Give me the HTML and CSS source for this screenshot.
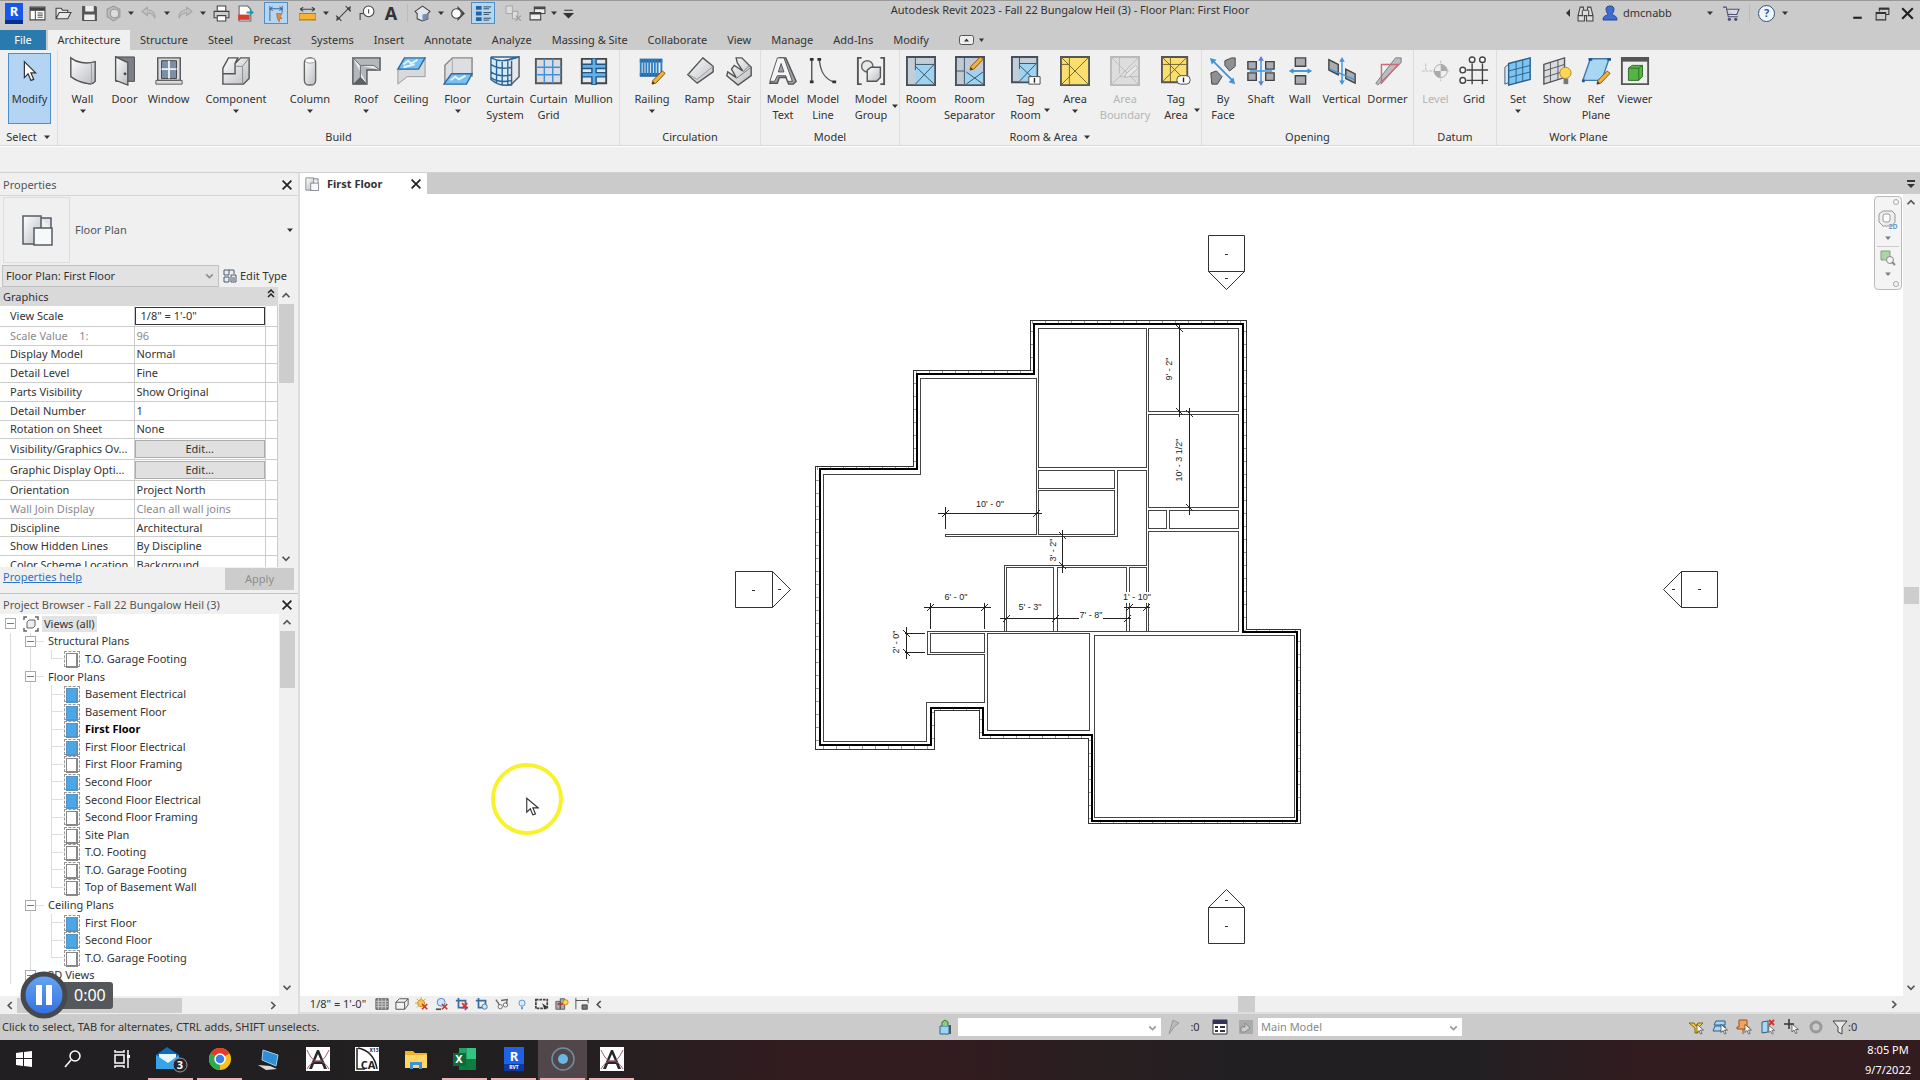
FILE: index.html
```
<!DOCTYPE html>
<html lang="en">
<head>
  <meta charset="UTF-8">
  <title>Autodesk Revit 2023 - Floor Plan: First Floor</title>
  <link rel="stylesheet" href="styles.css">
</head>
<body>

  <!-- shared symbols -->
  <svg class="defs" width="0" height="0" aria-hidden="true">
    <defs>
      <linearGradient id="metal" x1="0" y1="0" x2="1" y2="1">
        <stop offset="0" stop-color="#fff"/><stop offset="1" stop-color="#b9bcc2"/>
      </linearGradient>
      <linearGradient id="play" x1="0" y1="0" x2="0" y2="1">
        <stop offset="0" stop-color="#6aa5f5"/><stop offset="1" stop-color="#2f6fe0"/>
      </linearGradient>
    </defs>
    <symbol id="caret" viewBox="0 0 8 8"><path d="M1 2.500h6L4 6z" fill="#333"/></symbol>
    <symbol id="up" viewBox="0 0 16 16"><path d="M4 10l4-4 4 4" fill="none" stroke="#555" stroke-width="2"/></symbol>
    <symbol id="down" viewBox="0 0 16 16"><path d="M4 6l4 4 4-4" fill="none" stroke="#555" stroke-width="2"/></symbol>
    <symbol id="left" viewBox="0 0 16 16"><path d="M10 4L6 8l4 4" fill="none" stroke="#555" stroke-width="2"/></symbol>
    <symbol id="right" viewBox="0 0 16 16"><path d="M6 4l4 4-4 4" fill="none" stroke="#555" stroke-width="2"/></symbol>
    <symbol id="close" viewBox="0 0 16 16"><path d="M3 3l10 10M13 3L3 13" fill="none" stroke="#222" stroke-width="2"/></symbol>
    <symbol id="plan" viewBox="0 0 32 32">
      <path d="M2 2h18v28H2z" fill="url(#metal)" stroke="#555b66" stroke-width="1.500"/>
      <path d="M20 4h10v10" fill="#dfe3ec" stroke="#555b66" stroke-width="1.500"/>
      <path d="M13 14h18v17H13z" fill="#f7f8fa" stroke="#555b66" stroke-width="1.500"/>
    </symbol>
    <symbol id="pencil" viewBox="0 0 16 16"><path d="M12 1l3 2.500L5 14l-4 1 1-4z" fill="#f5b234" stroke="#7a4d10"/><path d="M1 15l1-3 2 2z" fill="#333"/></symbol>
    <symbol id="app-a" viewBox="0 0 24 24">
      <path d="M0 0h24v24H0z" fill="#fff"/>
      <path d="M3 22L11 3h2l8 19h-3l-2-5H8l-2 5zM12 7l-3 7h6z" fill="#26262e"/>
      <path d="M1 3c4 8 6 11 11 11S19 11 23 3M1 22c3-5 6-8 11-8s8 3 11 8" fill="none" stroke="#9a5a66"/>
    </symbol>
    <symbol id="arrow-cursor" viewBox="0 0 16 22"><path d="M2 1v16l4-4 3 7 3-1-3-7h6z" fill="#fff" stroke="#333" stroke-width="1.300"/></symbol>
  </svg>

  <header class="titlebar">
    <div class="qat">
      <button class="tb" aria-label="Revit"><svg width="20" height="23" viewBox="0 0 20 23"><path d="M1 1h18v21H1z" fill="#1858e8"/><path d="M1 18h18v4H1z" fill="#0a2f8a"/><text x="10" y="14" class="logo-r">R</text></svg></button>
      <button class="tb" aria-label="Home"><svg viewBox="0 0 16 16"><path d="M1 2h14v12H1z" fill="#fff" stroke="#444"/><path d="M1 4h14" stroke="#444" stroke-width="3"/><path d="M6 5v9M8 7.500h5M8 9.500h5M8 11.500h5" stroke="#555"/></svg></button>
      <button class="tb" aria-label="Open"><svg viewBox="0 0 16 16"><path d="M1 13V3h5l1 2h5v2M1 13L4 7h11l-3 6z" fill="#e8e8e8" stroke="#444"/></svg></button>
      <button class="tb" aria-label="Save"><svg viewBox="0 0 16 16"><path d="M1 1h13l1 1v13H1z" fill="#555"/><path d="M4 1h8v5H4zM3 9h10v5H3z" fill="#eee"/></svg></button>
      <button class="tb" aria-label="Sync"><svg viewBox="0 0 16 16"><path d="M2 4l6-3 6 3v7l-6 4-6-4z" fill="#bbb" stroke="#999"/><circle cx="9" cy="8" r="4" fill="#ddd" stroke="#999"/></svg></button>
      <svg class="dd"><use href="#caret"/></svg>
      <button class="tb" aria-label="Undo"><svg viewBox="0 0 16 16"><path d="M6 2L1 6l5 4V7.500c4 0 6 1 7 5C14 8 11 4.500 6 4.500z" fill="#c2c2c2" stroke="#a5a5a5"/></svg></button>
      <svg class="dd"><use href="#caret"/></svg>
      <button class="tb" aria-label="Redo"><svg viewBox="0 0 16 16"><path d="M10 2l5 4-5 4V7.500c-4 0-6 1-7 5C2 8 5 4.500 10 4.500z" fill="#c2c2c2" stroke="#a5a5a5"/></svg></button>
      <svg class="dd"><use href="#caret"/></svg>
      <button class="tb" aria-label="Print"><svg viewBox="0 0 16 16"><path d="M4 1h8v5H4z" fill="#fff" stroke="#444"/><path d="M1 6h14v6H1z" fill="#ccc" stroke="#444"/><path d="M4 10h8v5H4z" fill="#fff" stroke="#444"/></svg></button>
      <button class="tb" aria-label="Export PDF"><svg viewBox="0 0 16 16"><path d="M2 1h8l3 3v11H2z" fill="#fff" stroke="#666"/><path d="M1 9h11v5H1z" fill="#d8402c"/><path d="M9 6h3V4l4 3-4 3V8H9z" fill="#1f9bb4"/></svg></button>
      <button class="tb active" aria-label="Activate Controls"><svg width="18" height="18" viewBox="0 0 18 18"><path d="M2 1v16M15 1v7M2 4h13M2 4l3-2M2 4l3 2M15 4l-3-2M15 4l-3 2" fill="none" stroke="#35608c"/><path d="M9 9h6l-2 3 2 2-3 1v3l-2-3z" fill="#e08a3a" stroke="#9b5218" stroke-width=".5"/></svg></button>
      <button class="tb" aria-label="Measure"><svg viewBox="0 0 16 16"><path d="M0 8h16v6H0z" fill="#f3b334" stroke="#b77a16"/><path d="M1 4h14M1 4l3-2M1 4l3 2M15 4l-3-2M15 4l-3 2" stroke="#444" fill="none"/></svg></button>
      <svg class="dd"><use href="#caret"/></svg>
      <button class="tb" aria-label="Aligned Dimension"><svg viewBox="0 0 16 16"><path d="M3 13L13 3M1 10l5 5M10 1l5 5" stroke="#444" fill="none"/><path d="M1 15l1-5 3 3zM15 1l-1 5-3-3z" fill="#444"/></svg></button>
      <button class="tb" aria-label="Tag"><svg viewBox="0 0 16 16"><circle cx="10" cy="6" r="5" fill="#fff" stroke="#444"/><path d="M2 14V8h3M10 4v4" stroke="#444" fill="none"/></svg></button>
      <button class="tb big-a">A</button>
      <span class="sep"></span>
      <button class="tb" aria-label="3D View"><svg viewBox="0 0 16 16"><path d="M1 6l7-5 7 5-2 2v5l-5 2-5-2V8z" fill="#e3e6ea" stroke="#444"/><path d="M8 9v6l5-2V8z" fill="#6f8fb3"/></svg></button>
      <svg class="dd"><use href="#caret"/></svg>
      <button class="tb" aria-label="Section"><svg viewBox="0 0 16 16"><circle cx="7" cy="8" r="4.500" fill="#fff" stroke="#444"/><path d="M8 1l7 7-7 7V12a4 4 0 000-8z" fill="#444"/></svg></button>
      <button class="tb active" aria-label="Thin Lines"><svg width="18" height="18" viewBox="0 0 18 18"><path d="M1 3h6M1 9h6M1 15h6" stroke="#27639b" stroke-width="4"/><path d="M9 2h8M9 4h6M9 8h8M9 10h6M9 14h8M9 16h6" stroke="#34485c"/></svg></button>
      <button class="tb" aria-label="Close Inactive"><svg viewBox="0 0 16 16"><path d="M1 1h6v7H1zM7 6h5v7H7z" fill="#ddd" stroke="#aaa"/><path d="M10 10l5 5M15 10l-5 5" stroke="#999"/></svg></button>
      <button class="tb" aria-label="Switch Windows"><svg viewBox="0 0 16 16"><path d="M5 2h10v6H5zM1 7h10v7H1z" fill="#eee" stroke="#444"/><path d="M1 8h10M5 3h10" stroke="#444" stroke-width="2"/></svg></button>
      <svg class="dd"><use href="#caret"/></svg>
      <button class="tb" aria-label="Customize"><svg viewBox="0 0 16 16"><path d="M4 5h8M4 8h8l-4 4z" stroke="#333" fill="#333"/></svg></button>
    </div>
    <div class="app-title">Autodesk Revit 2023 - Fall 22 Bungalow Heil (3) - Floor Plan: First Floor</div>
    <div class="account">
      <svg class="dd" viewBox="0 0 8 8"><path d="M6 0v8L2 4z" fill="#333"/></svg>
      <button class="tb" aria-label="Search"><svg viewBox="0 0 16 16"><path d="M3 2h3v3h4V2h3l2 8v5H9v-5H7v5H1v-5z" fill="#ddd" stroke="#444"/><path d="M1 10h5M10 10h5M5 5v5M11 5v5" stroke="#444"/></svg></button>
      <svg class="ico" viewBox="0 0 16 16"><path d="M8 1c6 0 4 6 2 8 1 2 5 1 5 6H1c0-5 4-4 5-6C4 7 2 1 8 1z" fill="#3d6bd0" stroke="#274a99"/></svg>
      <span class="user">dmcnabb</span>
      <svg class="dd"><use href="#caret"/></svg>
      <button class="tb" aria-label="Store"><svg viewBox="0 0 16 16"><path d="M0 2h3l2 9h9M4 4h11l-2 5H5" fill="#d9dbe6" stroke="#4b5070"/><circle cx="6" cy="13.500" r="1.500" fill="#4b5070"/><circle cx="12" cy="13.500" r="1.500" fill="#4b5070"/></svg></button>
      <span class="sep"></span>
      <button class="tb help" aria-label="Help">?</button>
      <svg class="dd"><use href="#caret"/></svg>
      <span></span>
      <button class="tb" aria-label="Minimize"><svg viewBox="0 0 16 16"><path d="M4 12h8" stroke="#222" stroke-width="2"/></svg></button>
      <button class="tb" aria-label="Restore"><svg viewBox="0 0 16 16"><path d="M5 6V3h9v6h-3M2 7h9v7H2z" fill="none" stroke="#333"/><path d="M5 3.500h9M2 7.500h9" stroke="#333" stroke-width="2"/></svg></button>
      <button class="tb" aria-label="Close"><svg viewBox="0 0 16 16"><use href="#close"/></svg></button>
    </div>
  </header>

  <nav class="tabs">
    <button class="tab file">File</button>
    <button class="tab current">Architecture</button>
    <button class="tab">Structure</button>
    <button class="tab">Steel</button>
    <button class="tab">Precast</button>
    <button class="tab">Systems</button>
    <button class="tab">Insert</button>
    <button class="tab">Annotate</button>
    <button class="tab">Analyze</button>
    <button class="tab">Massing &amp; Site</button>
    <button class="tab">Collaborate</button>
    <button class="tab">View</button>
    <button class="tab">Manage</button>
    <button class="tab">Add-Ins</button>
    <button class="tab">Modify</button>
    <button class="tab display" aria-label="Ribbon display"><svg width="26" height="10" viewBox="0 0 26 10"><rect x=".5" y=".5" width="14" height="9" rx="2" fill="#eee" stroke="#555"/><path d="M5 6.500h5L7.500 3.500zM20 3.500h5L22.500 7z" fill="#333"/></svg></button>
  </nav>

  <section class="ribbon">
    <div class="panel select">
      <div class="tools">
        <button class="tool on"><svg viewBox="0 0 32 32"><path d="M10 6v17l4-4 3 7 3-1-3-7h5z" fill="#fff" stroke="#333" stroke-width="1.300"/></svg><span>Modify</span></button>
      </div>
      <div class="panel-name">Select <svg class="dd"><use href="#caret"/></svg></div>
    </div>

    <div class="panel build">
      <div class="tools">
        <button class="tool"><svg viewBox="0 0 32 32"><path d="M3 2c6 5 16 7 26 4v21c-3 4-7 3-10 2C13 28 7 25 3 22z" fill="url(#metal)" stroke="#555" stroke-width="1.500"/><path d="M25 7v23" stroke="#999"/></svg><span>Wall</span><svg class="dd"><use href="#caret"/></svg></button>
        <button class="tool"><svg viewBox="0 0 32 32"><path d="M6 1h20v26H6z" fill="#7c8088" stroke="#444"/><path d="M6 1l13 6v24L6 26z" fill="url(#metal)" stroke="#555" stroke-width="1.500"/><circle cx="16" cy="19" r="1.500" fill="#444"/></svg><span>Door</span></button>
        <button class="tool"><svg viewBox="0 0 32 32"><path d="M4 2h24v24H4z" fill="#d8dbe0" stroke="#555" stroke-width="1.500"/><path d="M8 5h16v19H8z" fill="#7d8fa8" stroke="#444"/><path d="M16 5v19M8 14h16" stroke="#eee" stroke-width="2"/><path d="M2 26h28v4H2z" fill="#ddd" stroke="#555"/></svg><span>Window</span></button>
        <button class="tool"><svg viewBox="0 0 32 32"><path d="M2 13L8 2h10l-3 6v11H2zM15 19V8l6-6h9v22l-6 6H2V19z" fill="url(#metal)" stroke="#555" stroke-width="1.500"/><path d="M15 11h8l7-9M23 11v19" fill="none" stroke="#888"/></svg><span>Component</span><svg class="dd"><use href="#caret"/></svg></button>
        <button class="tool"><svg viewBox="0 0 32 32"><rect x="10" y="2" width="12" height="29" rx="5" fill="url(#metal)" stroke="#666" stroke-width="1.500"/><ellipse cx="16" cy="5" rx="5" ry="2.500" fill="#fff" stroke="#999"/></svg><span>Column</span><svg class="dd"><use href="#caret"/></svg></button>
        <button class="tool"><svg viewBox="0 0 32 32"><path d="M2 2h29v13H17v15H2z" fill="#b4b8be" stroke="#555" stroke-width="1.500"/><path d="M2 2l8 8v13l7 7M10 10h14l7 5" fill="#e9ebee" stroke="#666"/><path d="M2 30l8-8 7 8z" fill="#5d6066"/></svg><span>Roof</span><svg class="dd"><use href="#caret"/></svg></button>
        <button class="tool"><svg viewBox="0 0 32 32"><path d="M2 15v15l10-8h19V2z" fill="#d7d9dc" stroke="#999"/><path d="M9 2h22l-7 12H2z" fill="#7cc0ef" stroke="#2b6ca8" stroke-width="1.500"/><path d="M8 9l5-4 3 3 7-4M8 12l12-3" stroke="#e6f5ff" fill="none" stroke-width="2"/></svg><span>Ceiling</span></button>
        <button class="tool"><svg viewBox="0 0 32 32"><path d="M2 30V10l8-8h21v20" fill="#dcdee1" stroke="#888" stroke-width="1.500"/><path d="M10 2v17" stroke="#aaa"/><path d="M9 19h22l-6 11H1z" fill="#7cc0ef" stroke="#2b6ca8" stroke-width="1.500"/><path d="M8 26l5-4 4 3 7-4" stroke="#e6f5ff" fill="none" stroke-width="2"/></svg><span>Floor</span><svg class="dd"><use href="#caret"/></svg></button>
        <button class="tool"><svg viewBox="0 0 32 32"><path d="M1 3c7 3 13 3 19 1V31C13 32 6 29 1 25z" fill="#d4ebfb"/><path d="M20 4L31 1v21l-8 8-3 1" fill="#e5e7ea" stroke="#555" stroke-width="1.500"/><path d="M1 1h30L20 4C12 6 7 5 1 2v23c6 5 12 7 19 6h3V5M7 5v24M13 6v24M19 5v26M1 9c7 5 14 5 22 3M1 17c7 5 14 5 22 3M1 23c7 5 14 5 22 3" fill="none" stroke="#2b6597" stroke-width="1.500"/></svg><span>Curtain<br>System</span></button>
        <button class="tool"><svg viewBox="0 0 32 32"><path d="M2 3h27v26H2z" fill="#d8dce2" stroke="#555" stroke-width="2"/><path d="M11 3v26M20 3v26M2 12h27M2 20h27" stroke="#438edb" stroke-width="1.500"/></svg><span>Curtain<br>Grid</span></button>
        <button class="tool"><svg viewBox="0 0 32 32"><path d="M3 3h26v26H3z" fill="#dfe8f0" stroke="#444" stroke-width="2"/><path d="M16 2v29M3 11h26M3 20h26" stroke="#22557f" stroke-width="6"/><path d="M16 3v27M4 11h24M4 20h24" stroke="#61b2ec" stroke-width="3"/></svg><span>Mullion</span></button>
      </div>
      <div class="panel-name">Build</div>
    </div>

    <div class="panel circulation">
      <div class="tools">
        <button class="tool"><svg viewBox="0 0 32 32"><path d="M3 5h24M3 20h24" stroke="#245e94" stroke-width="4"/><path d="M4 3v18M7 3v18M10 3v18M13 3v18M16 3v18M19 3v18M22 3v18M26 3v18" stroke="#2f7fc4" stroke-width="2"/><use href="#pencil" x="15" y="15" width="16" height="16"/></svg><span>Railing</span><svg class="dd"><use href="#caret"/></svg></button>
        <button class="tool"><svg viewBox="0 0 32 32"><path d="M19 2l11 9v6L13 29 3 20z" fill="url(#metal)" stroke="#555" stroke-width="1.500"/><path d="M30 11L13 25l-10-6" fill="none" stroke="#999"/></svg><span>Ramp</span></button>
        <button class="tool"><svg viewBox="0 0 32 32"><path d="M13 2h6l10 10v9L15 31 3 21l1-4 9 6-5-9 3-4 9 6-6-9z" fill="url(#metal)" stroke="#555" stroke-width="1.500"/><path d="M13 24l16-12M20 17l7-7" stroke="#777"/></svg><span>Stair</span></button>
      </div>
      <div class="panel-name">Circulation</div>
    </div>

    <div class="panel model">
      <div class="tools">
        <button class="tool"><svg viewBox="0 0 32 32"><path d="M12 2h7l11 25-3 3h-5l-3-7h-7l-2 6H2z" fill="#9ba0a8" stroke="#555" stroke-width="1.500"/><path d="M10 2h7l9 25h-5l-2-6h-9l-3 6H2zM14 8l-3 9h6z" fill="#f5f5f5" stroke="#555"/></svg><span>Model<br>Text</span></button>
        <button class="tool"><svg viewBox="0 0 32 32"><path d="M4 3v24M12 3c1 13 5 22 17 25" stroke="#555" stroke-width="1.500" fill="none"/><path d="M2 2h4v3H2zM2 26h4v3H2zM10 2h4v3h-4zM26 26h4v3h-4z" fill="#333"/></svg><span>Model<br>Line</span></button>
        <button class="tool"><svg viewBox="0 0 32 32"><path d="M6 2H2v28h4M26 2h4v28h-4" fill="none" stroke="#555" stroke-width="2"/><circle cx="12" cy="11" r="6" fill="#e8e8e8" stroke="#666" stroke-width="1.500"/><path d="M12 15l4-3h10v11l-4 4H12z" fill="url(#metal)" stroke="#555" stroke-width="1.500"/></svg><span>Model<br>Group</span><svg class="dd side"><use href="#caret"/></svg></button>
      </div>
      <div class="panel-name">Model</div>
    </div>

    <div class="panel rooms">
      <div class="tools">
        <button class="tool"><svg viewBox="0 0 32 32"><path d="M1 1h30v30H1z" fill="#c3cdd8" stroke="#44505c" stroke-width="2"/><path d="M10 9h20v21H10z" fill="#9ed2f1"/><path d="M10 1v14M10 9h20M10 11l20 19M30 9L10 30" stroke="#35505f" fill="none"/></svg><span>Room</span></button>
        <button class="tool"><svg viewBox="0 0 32 32"><path d="M1 1h30v30H1z" fill="#c3c9d4" stroke="#44505c" stroke-width="2"/><path d="M11 16h19v14H11z" fill="#9ed2f1"/><path d="M10 1v29M1 16h9M12 17l18 13M30 17L12 30" stroke="#35505f" fill="none"/><use href="#pencil" x="15" y="0" width="16" height="16"/></svg><span>Room<br>Separator</span></button>
        <button class="tool"><svg viewBox="0 0 32 32"><path d="M1 1h27v27H1z" fill="#c3cdd8" stroke="#44505c" stroke-width="2"/><path d="M9 8h18v19H9z" fill="#9ed2f1"/><path d="M9 1v13M9 8h18M9 10l18 17M27 8L9 27" stroke="#35505f" fill="none"/><path d="M19 22h12v8H19z" fill="#fff" stroke="#444"/><path d="M25 23.500v5" stroke="#222" stroke-width="1.500"/></svg><span>Tag<br>Room</span><svg class="dd side low"><use href="#caret"/></svg></button>
        <button class="tool"><svg viewBox="0 0 32 32"><path d="M1 1h30v30H1z" fill="#fbdf6e" stroke="#555" stroke-width="2"/><path d="M1 1l30 30M31 1L1 31M10 1v30M1 9h9" stroke="#6e6236" fill="none"/></svg><span>Area</span><svg class="dd"><use href="#caret"/></svg></button>
        <button class="tool" disabled><svg viewBox="0 0 32 32"><path d="M1 1h30v30H1z" fill="#ddd" stroke="#b9b9b9" stroke-width="2"/><path d="M1 1l30 30M31 1L1 31M10 1v18M10 22h20" stroke="#bbb" fill="none"/><path d="M27 10l3 3-10 9-4 1 1-4z" fill="#e6e6e6" stroke="#bbb"/></svg><span>Area<br>Boundary</span></button>
        <button class="tool"><svg viewBox="0 0 32 32"><path d="M1 1h27v27H1z" fill="#fbdf6e" stroke="#555" stroke-width="2"/><path d="M1 1l27 27M28 1L1 28M10 1v27M1 9h27" stroke="#6e6236" fill="none"/><rect x="17" y="21" width="14" height="9" rx="4" fill="#fff" stroke="#444"/><path d="M24 23v5" stroke="#222" stroke-width="1.500"/></svg><span>Tag<br>Area</span><svg class="dd side low"><use href="#caret"/></svg></button>
      </div>
      <div class="panel-name">Room &amp; Area <svg class="dd"><use href="#caret"/></svg></div>
    </div>

    <div class="panel opening">
      <div class="tools">
        <button class="tool"><svg viewBox="0 0 32 32"><path d="M18 5l7-3h4v9l-6 5-5-6zM3 18l6-2 6 6-5 8H4z" fill="#8d9196" stroke="#444"/><path d="M5 5l22 22" stroke="#3f93dd" stroke-width="2"/><path d="M2 2l7 2-5 5zM29 30l-7-2 5-5z" fill="#3f93dd"/></svg><span>By<br>Face</span></button>
        <button class="tool"><svg viewBox="0 0 32 32"><path d="M2 6h9v8H2zM21 6h9v8h-9zM2 18h9v8H2zM21 18h9v8h-9z" fill="#a9adb2" stroke="#444" stroke-width="1.500"/><path d="M16 3v26M4 16h24" stroke="#3f93dd" stroke-width="1.500"/><path d="M16 0l3 5h-6zM16 32l3-5h-6z" fill="#5b7be8"/></svg><span>Shaft</span></button>
        <button class="tool"><svg viewBox="0 0 32 32"><path d="M11 2h11v9H11zM11 21h11v9H11z" fill="#a9adb2" stroke="#444" stroke-width="1.500"/><path d="M6 16h21" stroke="#3f93dd" stroke-width="2"/><path d="M4 16l5-3v6zM29 16l-5-3v6z" fill="#3f93dd"/></svg><span>Wall</span></button>
        <button class="tool"><svg viewBox="0 0 32 32"><path d="M2 4l10 5v11L2 15zM20 14l10 5v10l-10-5z" fill="#a9adb2" stroke="#444" stroke-width="1.500"/><path d="M16 4v24M3 14l26 11" stroke="#3f93dd" stroke-width="1.500"/><path d="M16 1l3 5h-6zM16 31l3-5h-6z" fill="#3f93dd"/></svg><span>Vertical</span></button>
        <button class="tool"><svg viewBox="0 0 32 32"><path d="M3 29L24 2h6v5L5 31z" fill="#b9bcc0" stroke="#777"/><path d="M9 9h18L9 29z" fill="none" stroke="#c96a76" stroke-width="1.500"/></svg><span>Dormer</span></button>
      </div>
      <div class="panel-name">Opening</div>
    </div>

    <div class="panel datum">
      <div class="tools">
        <button class="tool" disabled><svg viewBox="0 0 32 32"><path d="M1 16h29M5 8v7M21 5v22" stroke="#bbb" stroke-dasharray="3 1"/><circle cx="21" cy="16" r="7" fill="#eee" stroke="#aaa"/><path d="M21 9a7 7 0 017 7h-7zM21 23a7 7 0 01-7-7h7z" fill="#aaa"/></svg><span>Level</span></button>
        <button class="tool"><svg viewBox="0 0 32 32"><path d="M14 8v22M25 8v22M8 15h23M8 26h23" stroke="#444" stroke-width="1.500"/><g fill="#fff" stroke="#444" stroke-width="1.500"><circle cx="14" cy="4" r="3"/><circle cx="25" cy="4" r="3"/><circle cx="4" cy="15" r="3"/><circle cx="4" cy="26" r="3"/></g></svg><span>Grid</span></button>
      </div>
      <div class="panel-name">Datum</div>
    </div>

    <div class="panel workplane">
      <div class="tools">
        <button class="tool"><svg viewBox="0 0 32 32"><path d="M2 12l5-4v20l-5 2z" fill="#d4ebfb" stroke="#457"/><path d="M6 8l23-6v23L6 31z" fill="#7cc4f2" stroke="#2b6088" stroke-width="1.500"/><path d="M14 6v23M21 4v23M6 16l23-6M6 23l23-6" stroke="#2b6088"/></svg><span>Set</span><svg class="dd"><use href="#caret"/></svg></button>
        <button class="tool"><svg viewBox="0 0 32 32"><path d="M2 9l22-7v21L2 30z" fill="#d9dbe2" stroke="#555" stroke-width="1.500"/><path d="M9 7v21M17 4v21M2 16l22-7M2 23l22-7" stroke="#555"/><circle cx="25" cy="18" r="6" fill="#ffd653" stroke="#b98712"/><path d="M23 24h5v6h-5z" fill="#777"/></svg><span>Show</span></button>
        <button class="tool"><svg viewBox="0 0 32 32"><path d="M10 3h20l-8 23H2z" fill="#a9d6f3" stroke="#3e7aa8" stroke-width="1.500"/><path d="M8 2h4v3H8zM28 2h4v3h-4zM1 25h3v3H1z" fill="#245a85"/><use href="#pencil" x="16" y="15" width="16" height="16"/></svg><span>Ref<br>Plane</span></button>
        <button class="tool"><svg viewBox="0 0 32 32"><path d="M2 2h28v28H2z" fill="#eee" stroke="#555" stroke-width="2"/><path d="M2 4h28" stroke="#555" stroke-width="4"/><path d="M9 13l4-3h11v12l-4 4H9z" fill="#55b544" stroke="#2f6b27"/><path d="M9 13h11v13M20 13l4-3" fill="none" stroke="#2f6b27"/></svg><span>Viewer</span></button>
      </div>
      <div class="panel-name">Work Plane</div>
    </div>
  </section>

  <div class="options"></div>

  <main class="workspace">
    <aside class="dock">
      <section class="properties">
        <header class="dock-title"><span>Properties</span><button class="x" aria-label="Close Properties"><svg><use href="#close"/></svg></button></header>
        <div class="type">
          <div class="thumb"><svg width="32" height="32"><use href="#plan"/></svg></div>
          <span>Floor Plan</span>
          <svg class="dd"><use href="#caret"/></svg>
        </div>
        <div class="instance">
          <div class="combo">
            <select aria-label="Instance"><option>Floor Plan: First Floor</option></select>
            <svg class="chev"><use href="#down"/></svg>
          </div>
          <button class="edit-type"><svg width="14" height="14" viewBox="0 0 14 14"><path d="M1 1h5v5H1zM1 8h5v5H1zM6 1h5v4M8 6h5v7H8z" fill="#e8ecf2" stroke="#4d5b6c"/><path d="M9 9h3M9 11h3" stroke="#4d5b6c"/></svg>Edit Type</button>
        </div>
        <div class="grid-wrap">
          <div class="grid-main">
            <div class="group">Graphics<svg width="10" height="10" viewBox="0 0 10 10"><path d="M2 4l3-3 3 3M2 8l3-3 3 3" fill="none" stroke="#222" stroke-width="1.500"/></svg></div>
            <table class="props">
              <tr><th><label for="scale">View Scale</label></th><td class="field"><input id="scale" type="text" value="1/8&quot; = 1'-0&quot;"></td><td></td></tr>
              <tr class="off"><th>Scale Value &nbsp; &nbsp;1:</th><td>96</td><td></td></tr>
              <tr><th>Display Model</th><td>Normal</td><td></td></tr>
              <tr><th>Detail Level</th><td>Fine</td><td></td></tr>
              <tr><th>Parts Visibility</th><td>Show Original</td><td></td></tr>
              <tr><th>Detail Number</th><td>1</td><td></td></tr>
              <tr><th>Rotation on Sheet</th><td>None</td><td></td></tr>
              <tr><th>Visibility/Graphics Ov...</th><td class="field"><button>Edit...</button></td><td></td></tr>
              <tr><th>Graphic Display Opti...</th><td class="field"><button>Edit...</button></td><td></td></tr>
              <tr><th>Orientation</th><td>Project North</td><td></td></tr>
              <tr class="off"><th>Wall Join Display</th><td>Clean all wall joins</td><td></td></tr>
              <tr><th>Discipline</th><td>Architectural</td><td></td></tr>
              <tr><th>Show Hidden Lines</th><td>By Discipline</td><td></td></tr>
              <tr><th>Color Scheme Location</th><td>Background</td><td></td></tr>
            </table>
          </div>
          <div class="vscroll"><svg><use href="#up"/></svg><i class="bar props-bar"></i><svg class="end"><use href="#down"/></svg></div>
        </div>
        <footer class="props-foot"><a href="#">Properties help</a><button disabled>Apply</button></footer>
      </section>

      <section class="browser">
        <header class="dock-title"><span>Project Browser - Fall 22 Bungalow Heil (3)</span><button class="x" aria-label="Close Project Browser"><svg><use href="#close"/></svg></button></header>
        <div class="tree-wrap">
          <ul class="tree">
            <li class="root"><i class="minus"></i><svg width="16" height="16" viewBox="0 0 16 16"><path d="M1 4V1h3M12 1h3v3M15 12v3h-3M4 15H1v-3" fill="none" stroke="#666" stroke-width="1.500"/><path d="M4 6l2-2h6v6l-2 2H4z" fill="#eee" stroke="#666"/></svg><b>Views (all)</b></li>
            <li class="group-row"><i class="minus"></i>Structural Plans</li>
            <li class="view last"><i class="box"></i>T.O. Garage Footing</li>
            <li class="group-row"><i class="minus"></i>Floor Plans</li>
            <li class="view"><i class="box full"></i>Basement Electrical</li>
            <li class="view"><i class="box full"></i>Basement Floor</li>
            <li class="view"><i class="box full"></i><strong>First Floor</strong></li>
            <li class="view"><i class="box full"></i>First Floor Electrical</li>
            <li class="view"><i class="box"></i>First Floor Framing</li>
            <li class="view"><i class="box full"></i>Second Floor</li>
            <li class="view"><i class="box full"></i>Second Floor Electrical</li>
            <li class="view"><i class="box"></i>Second Floor Framing</li>
            <li class="view"><i class="box"></i>Site Plan</li>
            <li class="view"><i class="box"></i>T.O. Footing</li>
            <li class="view"><i class="box"></i>T.O. Garage Footing</li>
            <li class="view last"><i class="box"></i>Top of Basement Wall</li>
            <li class="group-row"><i class="minus"></i>Ceiling Plans</li>
            <li class="view"><i class="box full"></i>First Floor</li>
            <li class="view"><i class="box full"></i>Second Floor</li>
            <li class="view last"><i class="box"></i>T.O. Garage Footing</li>
            <li class="group-row"><i class="minus"></i>3D Views</li>
          </ul>
          <div class="vscroll"><svg><use href="#up"/></svg><i class="bar tree-bar"></i><svg class="end"><use href="#down"/></svg></div>
        </div>
        <div class="hscroll"><svg><use href="#left"/></svg><i class="bar"></i><svg class="end"><use href="#right"/></svg></div>
      </section>

      <!-- recorder overlay -->
      <div class="recorder">
        <button aria-label="Pause"><svg width="48" height="48" viewBox="0 0 48 48"><circle cx="24" cy="24" r="21" fill="url(#play)" stroke="#45484d" stroke-width="5"/><path d="M16 14h6v20h-6zM26 14h6v20h-6z" fill="#fff"/></svg></button>
        <span>0:00</span>
      </div>
    </aside>

    <section class="canvas">
      <div class="view-tabs">
        <div class="view-tab"><svg width="16" height="14"><use href="#plan"/></svg><span>First Floor</span><button class="x" aria-label="Close view"><svg><use href="#close"/></svg></button></div>
        <svg class="more" width="10" height="10" viewBox="0 0 10 10"><path d="M1 2h8" stroke="#333" stroke-width="2"/><path d="M1 5h8L5 9z" fill="#333"/></svg>
      </div>
      <div class="drawing">
        <svg class="sheet" viewBox="300 194 1603 802">
          <!-- exterior walls -->
          <g fill="none" stroke="#333" shape-rendering="crispEdges">
            <path d="M1030 320H1246V629H1300V823H1088V738H979V710H934V749H815V466H913V370H1030z"/>
            <path d="M1032 322H1244V631H1298V821H1090V736H981V708H932V747H817V468H915V372H1032z" stroke="#999" stroke-dasharray="1 12" stroke-width="3"/>
            <path d="M1034 324H1243V632H1297V821H1092V735H983V708H931V745H820V469H917V374H1034z" stroke="#000" stroke-width="2"/>
          </g>
          <!-- rooms and partitions -->
          <g fill="none" stroke="#444" shape-rendering="crispEdges">
            <path d="M1038 328h108v139h-108zM1148 328h90v83h-90zM1148 414h90v93h-90zM1148 510h18v18h-18zM1169 510h69v18h-69zM1148 531h90v100h-90z"/>
            <path d="M1038 470h76v18h-76zM1038 490h76v44h-76z"/>
            <path d="M1146 470H1117V536H945V534H1036V378H920V474H823V741H926V702H984V654H927V631H1004V565H1146z"/>
            <path d="M930 633h54v19h-54zM1006 567h47v64h-47zM1057 567h69v64h-69zM1129 567h17v64h-17z"/>
            <path d="M987 633h102v97h-102zM1094 635h200v182h-200z"/>
            <path d="M1004 631h145"/>
          </g>
          <!-- dimensions -->
          <g fill="none" stroke="#222">
            <path d="M1179.500 323v94M1189.500 408v107M938 513.500h104M945.500 507v22M1062.500 530v43M924 607.500h67M930.500 603v26M984.500 603v26M1000 618.500h79M1103 618.500h28M1124 607.500h26M906.500 627v32M905 633.500h20M905 652.500h20"/>
            <path d="M1176 325l7 7M1176 408l7 7M1186 410l7 7M1186 504l7 7M942 517l7-7M1033 517l7-7M1059 532l7 7M1059 562l7 7M927 611l7-7M981 611l7-7M1003 622l7-7M1052 622l7-7M1124 622l7-7M1126 611l7-7M1143 611l7-7M903 630l7 7M903 649l7 7"/>
          </g>
          <path d="M1122 592h32v11h-32z" fill="#fff"/>
          <g class="dim">
            <text transform="translate(1172 369) rotate(-90)">9' - 2"</text>
            <text transform="translate(1182 460) rotate(-90)">10' - 3 1/2"</text>
            <text x="990" y="507">10' - 0"</text>
            <text transform="translate(1056 550) rotate(-90)">3' - 2"</text>
            <text x="956" y="600">6' - 0"</text>
            <text x="1030" y="610">5' - 3"</text>
            <text x="1091" y="618">7' - 8"</text>
            <text x="1137" y="600">1' - 10"</text>
            <text transform="translate(899 642) rotate(-90)">2' - 0"</text>
          </g>
          <!-- elevation markers -->
          <g fill="none" stroke="#333">
            <path d="M1208.500 235.500h36v36h-36zM1208.500 271.500l18 18 18-18"/>
            <path d="M735.500 571.500h37v36h-37zM772.500 571.500l18 18-18 18"/>
            <path d="M1681.500 571.500h36v36h-36zM1681.500 571.500l-18 18 18 18"/>
            <path d="M1208.500 907.500h36v36h-36zM1208.500 907.500l18-18 18 18"/>
            <path d="M1225 254.500h3M1225 278.500h3M752 590.500h3M778 589.500h3M1698 589.500h3M1672 589.500h3M1225 926.500h3M1225 900.500h3"/>
          </g>
          <!-- click highlight -->
          <circle cx="527" cy="799" r="34" fill="none" stroke="#f8f22c" stroke-width="4"/>
          <use href="#arrow-cursor" x="525" y="797" width="14" height="20"/>
        </svg>
        <div class="navbar">
          <i></i>
          <svg width="22" height="22" viewBox="0 0 22 22"><path d="M6 2h9l3 3v8l-3 4H6l-4-4V5z" fill="#eee" stroke="#999"/><rect x="6" y="5" width="7" height="8" rx="2" fill="#fff" stroke="#999"/><text x="16" y="20" class="nav-2d">2D</text></svg>
          <svg class="dd"><use href="#caret"/></svg>
          <hr>
          <svg width="16" height="16" viewBox="0 0 16 16"><path d="M1 1h9v9H1z" fill="#a7d8a2" stroke="#8a9a8a"/><circle cx="10" cy="10" r="3.500" fill="#f4f4f4" stroke="#888"/><path d="M12 12l3 3" stroke="#888" stroke-width="2"/></svg>
          <svg class="dd"><use href="#caret"/></svg>
          <i></i>
        </div>
      </div>
      <div class="vscroll"><svg><use href="#up"/></svg><i class="bar view-bar"></i><svg class="end"><use href="#down"/></svg></div>
      <div class="view-controls">
        <button class="scale">1/8" = 1'-0"</button>
        <button aria-label="Detail Level"><svg viewBox="0 0 16 16"><path d="M1 2h14v12H1z" fill="#888" stroke="#555"/><path d="M1 5h14M1 8h14M1 11h14M4 2v12M8 2v12M12 2v12" stroke="#ccc"/></svg></button>
        <button aria-label="Visual Style"><svg viewBox="0 0 16 16"><path d="M1 6l4-4h10v7l-4 5H1z" fill="#f2f2f2" stroke="#444"/><path d="M1 6h10v8M11 6l4-4" fill="none" stroke="#444"/></svg></button>
        <button aria-label="Sun Path"><svg viewBox="0 0 16 16"><circle cx="7" cy="7" r="4" fill="#f8c74a" stroke="#c8881a"/><path d="M7 0v3M0 7h3M2 2l2 2M12 2l-2 2M2 12l2-2" stroke="#d89820"/><path d="M8 8l6 6M14 8l-6 6" stroke="#d2352a" stroke-width="2"/></svg></button>
        <button aria-label="Shadows"><svg viewBox="0 0 16 16"><circle cx="7" cy="6" r="4.500" fill="#cfe6f8" stroke="#3f7fb8"/><path d="M1 14h6" stroke="#555" stroke-width="2"/><path d="M8 8l6 6M14 8l-6 6" stroke="#d2352a" stroke-width="2"/></svg></button>
        <button aria-label="Crop View"><svg viewBox="0 0 16 16"><path d="M4 1v11h11M1 4h11v11" fill="none" stroke="#3a6ea5" stroke-width="2"/><path d="M8 7l6 6M14 7l-6 6" stroke="#d2352a" stroke-width="2"/></svg></button>
        <button aria-label="Crop Region"><svg viewBox="0 0 16 16"><path d="M4 1v11h6M1 4h11v4" fill="none" stroke="#3a6ea5" stroke-width="2"/><circle cx="11" cy="11" r="3" fill="#cfe6f8" stroke="#3a6ea5"/></svg></button>
        <button aria-label="Hide Isolate"><svg viewBox="0 0 16 16"><path d="M1 3l4 6M7 4l7-1-1 5" fill="none" stroke="#666" stroke-width="1.500"/><circle cx="6" cy="11" r="2.500" fill="none" stroke="#666"/><circle cx="12" cy="9" r="2.500" fill="none" stroke="#666"/></svg></button>
        <button aria-label="Reveal Hidden"><svg viewBox="0 0 16 16"><circle cx="8" cy="7" r="3.500" fill="#d7ecfb" stroke="#4b90cc"/><path d="M7 11h2v3H7z" fill="#4b90cc"/></svg></button>
        <button aria-label="Temporary Properties"><svg viewBox="0 0 16 16"><path d="M1 3h13v10H1z" fill="#eee" stroke="#444" stroke-width="2" stroke-dasharray="3 1"/><path d="M8 7l6 4-3 3z" fill="#333"/></svg></button>
        <button aria-label="Analytical Model"><svg viewBox="0 0 16 16"><path d="M1 5h5v9H1zM6 2h5v12H6z" fill="#aaa" stroke="#555"/><path d="M3 8h6" stroke="#b33" stroke-width="2"/><circle cx="12" cy="6" r="3" fill="#ffd653" stroke="#b98712"/></svg></button>
        <button aria-label="Constraints"><svg viewBox="0 0 16 16"><path d="M1 1v13M1 4h14M15 1v6" fill="none" stroke="#444"/><path d="M8 9h6v5H8z" fill="#777" stroke="#444"/></svg></button>
        <svg class="arrow"><use href="#left"/></svg>
        <div class="track"><i class="bar"></i></div>
        <svg class="arrow"><use href="#right"/></svg>
      </div>
    </section>
  </main>

  <footer class="status">
    <span class="hint">Click to select, TAB for alternates, CTRL adds, SHIFT unselects.</span>
    <svg class="ico" viewBox="0 0 16 16"><path d="M3 7h9v8H3z" fill="#9fd4ef" stroke="#256a96"/><path d="M5 7V3l3-2 3 2v4" fill="#8fca7c" stroke="#3b7a2e"/><path d="M13 6v9" stroke="#555" stroke-width="2"/></svg>
    <div class="combo"><select aria-label="Active workset"><option></option></select><svg class="chev"><use href="#down"/></svg></div>
    <svg class="ico" viewBox="0 0 16 16"><path d="M4 15L8 1l6 3-4 3z" fill="#bbb" stroke="#999"/></svg>
    <span class="count">:0</span>
    <svg class="ico" viewBox="0 0 16 16"><path d="M1 1h14v14H1z" fill="#fff" stroke="#334"/><path d="M1 3h14" stroke="#335" stroke-width="4"/><path d="M3 8h3M3 12h3M8 8h5M8 12h5" stroke="#334" stroke-width="2"/></svg>
    <svg class="ico" viewBox="0 0 16 16"><path d="M1 1h14v14H1z" fill="#aaa"/><path d="M3 13V8h4V4l5 5-5 4z" fill="#ccc" stroke="#888"/></svg>
    <div class="combo"><select aria-label="Design option" disabled><option>Main Model</option></select><svg class="chev"><use href="#down"/></svg></div>
    <div class="toggles">
      <button aria-label="Select links"><svg viewBox="0 0 16 16"><path d="M1 4h5l2 3 2-3h5l-5 5v5H7V9z" fill="#f4c63c" stroke="#8a6a10"/><use href="#arrow-cursor" x="8" y="5" width="8" height="11"/></svg></button>
      <button aria-label="Select underlay"><svg viewBox="0 0 16 16"><path d="M4 2h9v4H2zM3 7h10v5H1z" fill="#a9d6f3" stroke="#2b6088"/><use href="#arrow-cursor" x="8" y="5" width="8" height="11"/></svg></button>
      <button aria-label="Select pinned"><svg viewBox="0 0 16 16"><path d="M3 1h8v7h2v2H1V8h2zM7 10v5" fill="#f2a45c" stroke="#a04f12"/><use href="#arrow-cursor" x="8" y="5" width="8" height="11"/></svg></button>
      <button aria-label="Select by face"><svg viewBox="0 0 16 16"><path d="M2 3l6-1v11l-6 1z" fill="#a9d6f3" stroke="#2b6088"/><path d="M9 1l5 5M14 1L9 6" stroke="#d2352a" stroke-width="2"/><use href="#arrow-cursor" x="8" y="6" width="7" height="10"/></svg></button>
      <button aria-label="Drag elements"><svg viewBox="0 0 16 16"><path d="M5 0v10M0 5h10" stroke="#333" stroke-width="1.500"/><use href="#arrow-cursor" x="7" y="4" width="8" height="12"/></svg></button>
      <button aria-label="Background"><svg viewBox="0 0 16 16"><circle cx="8" cy="8" r="5" fill="none" stroke="#999" stroke-width="3"/></svg></button>
      <button class="filter"><svg viewBox="0 0 16 16"><path d="M1 2h14L10 8v7l-4-2V8z" fill="#e9e9e9" stroke="#444"/></svg>:0</button>
    </div>
  </footer>

  <nav class="taskbar">
    <div class="apps">
      <button aria-label="Start"><svg viewBox="0 0 24 24"><path d="M4 6l7-1v6H4zM12 5l8-1v7h-8zM4 12h7v7l-7-1zM12 12h8v8l-8-1z" fill="#fff"/></svg></button>
      <button aria-label="Search"><svg viewBox="0 0 24 24"><circle cx="14" cy="9" r="5" fill="none" stroke="#fff" stroke-width="1.500"/><path d="M10 13l-6 7" stroke="#fff" stroke-width="1.500"/></svg></button>
      <button aria-label="Task View"><svg viewBox="0 0 24 24"><path d="M5 8h9v8H5zM5 3v2h9V3M5 21v-2h9v2M18 3v18" fill="none" stroke="#fff" stroke-width="1.500"/><path d="M17 8h3v3h-3z" fill="#fff"/></svg></button>
      <button class="open" aria-label="Mail"><svg width="34" height="28" viewBox="0 0 34 28"><path d="M2 10L13 2l12 8v14H2z" fill="#0f6cbd"/><path d="M5 9h17v8l-8 4-9-4z" fill="#e8f4fd"/><path d="M2 10l12 8 11-8v14H2z" fill="#35a4e8"/><circle cx="26" cy="20" r="7" fill="#26262a" stroke="#999"/><text x="26" y="24" class="badge">3</text></svg></button>
      <button class="open" aria-label="Chrome"><svg viewBox="0 0 24 24"><circle cx="12" cy="12" r="11" fill="#fbc116"/><path d="M12 12L2.500 6.500a11 11 0 0119 0z" fill="#e33b2e"/><path d="M12 12L2.500 6.500A11 11 0 0012 23z" fill="#2da94f"/><circle cx="12" cy="12" r="5" fill="#3f7de8" stroke="#fff" stroke-width="1.500"/></svg></button>
      <button aria-label="Remote Desktop"><svg viewBox="0 0 24 24"><path d="M6 3l15 5-2 11L5 13z" fill="#2f8fd6" stroke="#9cd0f2"/><path d="M1 18l12 1 7 3-11 1z" fill="#ddd"/></svg></button>
      <button aria-label="Architect"><svg><use href="#app-a"/></svg></button>
      <button aria-label="Chief Architect"><svg viewBox="0 0 24 24"><path d="M0 0h24v24H0z" fill="#fff"/><path d="M2 1v21h8M3 1c10 2 17 9 19 21" fill="none" stroke="#222" stroke-width="1.500"/><text x="13" y="22" class="ca">CA</text><text x="19" y="5" class="x13">X13</text></svg></button>
      <button aria-label="File Explorer"><svg viewBox="0 0 24 24"><path d="M1 4h8l2 2h12v15H1z" fill="#f0b429"/><path d="M1 8h22v13H1z" fill="#ffd766"/><path d="M6 22v-7h12v7h-3v-4H9v4z" fill="#3c93dc"/></svg></button>
      <button class="open" aria-label="Excel"><svg viewBox="0 0 24 24"><path d="M6 1h17v22H6z" fill="#21a366"/><path d="M6 12h17v11H6z" fill="#107c41"/><path d="M14 1h9v11h-9z" fill="#33c481"/><path d="M0 6h13v13H0z" fill="#0e6b38"/><text x="6" y="16" class="xl">X</text></svg></button>
      <button class="open" aria-label="Revit"><svg viewBox="0 0 24 24"><path d="M2 0h20v24H2z" fill="#1f62e6"/><path d="M2 17h20v7H2z" fill="#0b3aa0"/><text x="12" y="14" class="logo-r">R</text><text x="12" y="22" class="rvt">RVT</text></svg></button>
      <button class="open focus" aria-label="Recorder"><svg viewBox="0 0 24 24"><circle cx="12" cy="12" r="11" fill="none" stroke="#6c8fa3" stroke-width="1.500"/><circle cx="12" cy="12" r="5" fill="#69b7e6"/></svg></button>
      <button class="open" aria-label="Architect"><svg><use href="#app-a"/></svg></button>
    </div>
    <div class="clock"><span>8:05 PM</span><span>9/7/2022</span></div>
  </nav>
</body>
</html>
```

FILE: styles.css
```
* {
  box-sizing: border-box;
}

body {
  margin: 0;
  height: 100vh;
  display: grid;
  grid-template-rows: 30px 20px 96px 27px 1fr 26px 40px;
  background: #f0f0f0;
  color: #333;
  font-family: "Noto Sans", "Open Sans", sans-serif;
  font-size: 11px;
  line-height: 16px;
  overflow: hidden;
}

button, input, select {
  font: inherit;
  color: inherit;
  border: 0;
  padding: 0;
  margin: 0;
  background: none;
}

svg {
  display: block;
  flex: none;
}

.defs {
  position: absolute;
}

.dd {
  width: 8px;
  height: 8px;
}

.ico {
  width: 16px;
  height: 18px;
}

.sep {
  width: 1px;
  height: 18px;
  background: #bbb;
}

/* title bar */
.titlebar {
  display: flex;
  background: #cbcbcb;
  border-top: 1px solid #999;
  padding-left: 3px;
}

.qat, .account {
  display: grid;
  height: 24px;
  align-items: center;
  justify-items: center;
}

.qat {
  grid-template-columns: 21px 26px 27px 24px 24px 12px 24px 11px 25px 11px 26px 23px 38px 24px 14px 21px 25px 24px 8px 23px 14px 18px 34px 26px 23px 10px 19px;
}

.account {
  grid-template-columns: 11px 25px 23px 83px 12px 30px 7px 27px 10px 54px 26px 24px 26px;
}

.tb {
  display: flex;
  align-items: center;
  justify-content: center;
}

.tb svg {
  width: 17px;
  height: 17px;
}

.qat .tb:first-child svg {
  width: 20px;
  height: 23px;
}

.tb.active {
  width: 24px;
  height: 22px;
  background: #b5d6f2;
  border: 1px solid #4d8fc9;
}

.big-a {
  font-size: 18px;
  font-weight: bold;
}

.logo-r {
  fill: #fff;
  font-size: 13px;
  font-weight: bold;
  text-anchor: middle;
}

.app-title {
  flex: 1;
  text-align: center;
  padding-top: 1px;
}

.user {
  justify-self: start;
  padding-left: 2px;
}

.help {
  width: 17px;
  height: 17px;
  border: 1px solid #35507c;
  border-radius: 50%;
  background: #f2f6fd;
  color: #2258c4;
  font-weight: bold;
}

/* ribbon tabs */
.tabs {
  display: flex;
  background: #cbcbcb;
}

.tab {
  padding: 0 10px;
  white-space: nowrap;
}

.tab.file {
  width: 46px;
  margin-right: 2px;
  background: #2a7ab0;
  color: #fff;
}

.tab.current {
  width: 82px;
  padding: 0;
  background: #f0f0f0;
}

.tab.display {
  padding-left: 20px;
}

/* ribbon */
.ribbon {
  display: flex;
  border-bottom: 1px solid #d8d8d8;
}

.panel {
  display: flex;
  flex-direction: column;
  justify-content: space-between;
  padding-top: 3px;
  border-right: 1px solid #ddd;
}

.tools {
  display: grid;
  height: 71px;
}

.select { width: 58px; }
.build { width: 562px; }
.circulation { width: 141px; }
.model { width: 139px; }
.rooms { width: 302px; }
.opening { width: 212px; }
.datum { width: 83px; }
.workplane { width: 163px; border: 0; }

.select .tools { grid-template-columns: 43px; padding-left: 8px; }
.build .tools { grid-template-columns: 45px 39px 49px 86px 62px 50px 40px 53px 42px 45px 45px; padding-left: 2px; }
.circulation .tools { grid-template-columns: 48px 47px 32px; padding-left: 8px; }
.model .tools { grid-template-columns: 40px 40px 56px; padding-left: 2px; }
.rooms .tools { grid-template-columns: 36px 61px 51px 48px 52px 50px; padding-left: 3px; }
.opening .tools { grid-template-columns: 40px 36px 42px 41px 51px; padding-left: 1px; }
.datum .tools { grid-template-columns: 37px 40px; padding-left: 3px; }
.workplane .tools { grid-template-columns: 38px 40px 38px 40px; padding-left: 2px; }

.tool {
  position: relative;
  display: flex;
  flex-direction: column;
  align-items: center;
  min-width: 0;
  padding-top: 2px;
  white-space: nowrap;
}

.tool svg {
  width: 30px;
  height: 32px;
  margin-bottom: 4px;
}

.tool .dd {
  width: 8px;
  height: 8px;
}

.tool .dd.side {
  position: absolute;
  right: 0;
  top: 49px;
}

.tool .dd.low {
  top: 53px;
}

.tool:disabled {
  color: #b5b5b5;
}

.tool.on {
  background: #b3d5f3;
  outline: 1px solid #4d8fc9;
  outline-offset: -1px;
}

.panel-name {
  display: flex;
  align-items: center;
  justify-content: center;
  gap: 6px;
}

.options {
  border-top: 1px solid #fff;
  border-bottom: 1px solid #d0d0d0;
}

/* workspace */
.workspace {
  display: grid;
  grid-template-columns: 300px 1fr;
  min-height: 0;
}

.dock {
  position: relative;
  display: flex;
  flex-direction: column;
  border-right: 2px solid #ddd;
  min-height: 0;
}

.dock-title {
  display: flex;
  justify-content: space-between;
  align-items: center;
  height: 22px;
  padding: 1px 4px 0 3px;
  color: #555;
  white-space: nowrap;
}

.x svg {
  width: 14px;
  height: 14px;
}

.properties {
  display: flex;
  flex-direction: column;
  height: 421px;
  border-bottom: 1px solid #c4c4c4;
}

.type {
  display: flex;
  align-items: center;
  gap: 5px;
  height: 70px;
  padding: 1px 4px 3px 3px;
  border-top: 1px solid #d5d5d5;
}

.type span {
  flex: 1;
  color: #555;
}

.thumb {
  display: grid;
  place-items: center;
  width: 67px;
  height: 66px;
  border: 1px solid #ddd;
}

.instance {
  display: flex;
  gap: 4px;
  height: 22px;
}

.combo {
  position: relative;
}

.combo select {
  appearance: none;
  width: 100%;
  height: 100%;
  padding-left: 3px;
  opacity: 1;
}

.chev {
  position: absolute;
  right: 2px;
  top: 3px;
  width: 13px;
  height: 14px;
  opacity: .6;
}

.instance .combo {
  width: 217px;
  margin-left: 2px;
  background: #e2e2e2;
  border: 1px solid #c0c0c0;
}

.edit-type {
  display: flex;
  align-items: center;
  gap: 3px;
  white-space: nowrap;
}

.grid-wrap {
  display: flex;
  flex: 1;
  min-height: 0;
}

.grid-main {
  width: 278px;
  overflow: hidden;
  background: #fff;
}

.group {
  display: flex;
  justify-content: space-between;
  height: 19px;
  padding: 2px 2px 0 3px;
  background: #d9d9d9;
}

.props {
  width: 100%;
  height: 269px;
  table-layout: fixed;
  border-collapse: collapse;
}

.props th, .props td {
  padding: 0 0 0 2px;
  border-bottom: 1px solid #ccc;
  border-right: 1px solid #ccc;
  font-weight: normal;
  text-align: left;
  white-space: nowrap;
}

.props th {
  width: 134px;
  padding-left: 10px;
}

.props td:last-child {
  width: 12px;
}

.props td.field {
  padding: 0;
}

.props .field button, .props input {
  display: block;
  width: 100%;
  height: 18px;
}

.props input {
  padding-left: 5px;
  border: 1px solid #333;
}

.props .field button {
  background: #e0e0e0;
  border: 1px solid #adadad;
  line-height: 14px;
}

.props .off {
  color: #8a8a8a;
}

.vscroll {
  display: flex;
  flex-direction: column;
  align-items: flex-start;
  flex: 1;
  padding-left: 1px;
  background: #f0f0f0;
}

.vscroll svg, .hscroll svg, .arrow {
  width: 14px;
  height: 17px;
}

.vscroll .end {
  margin-top: auto;
}

.bar {
  display: block;
  width: 15px;
  background: #cdcdcd;
}

.props-bar { height: 79px; }
.tree-bar { height: 57px; }

.props-foot {
  display: flex;
  justify-content: space-between;
  height: 26px;
  padding: 1px 4px 3px 3px;
}

.props-foot a {
  padding-top: 1px;
  color: #2a73c4;
}

.props-foot button {
  width: 69px;
  background: #ccc;
  color: #8c8c8c;
}

/* project browser */
.browser {
  display: flex;
  flex: 1;
  flex-direction: column;
  min-height: 0;
}

.browser .dock-title {
  height: 20px;
}

.tree-wrap {
  display: flex;
  flex: 1;
  min-height: 0;
}

.tree {
  display: flex;
  flex-direction: column;
  width: 279px;
  margin: 0;
  padding: 1px 0 12px;
  list-style: none;
  background: #fff;
}

.tree li {
  display: flex;
  flex: 1;
  align-items: center;
  white-space: nowrap;
  background: linear-gradient(#ddd, #ddd) 10px 0 / 1px 100% no-repeat;
}

.tree .root {
  gap: 3px;
  padding-left: 5px;
  background: none;
}

.root .minus {
  margin-right: 4px;
}

.root b {
  padding: 0 2px;
  background: #e3e3e3;
  font-weight: normal;
}

.tree .group-row {
  gap: 12px;
  padding-left: 25px;
  background:
    linear-gradient(#ddd, #ddd) 10px 0 / 1px 100% no-repeat,
    linear-gradient(#ddd, #ddd) 30px 0 / 1px 100% no-repeat,
    linear-gradient(#ddd, #ddd) 36px 50% / 8px 1px no-repeat;
}

.tree .view {
  gap: 5px;
  padding-left: 64px;
  background:
    linear-gradient(#ddd, #ddd) 10px 0 / 1px 100% no-repeat,
    linear-gradient(#ddd, #ddd) 30px 0 / 1px 100% no-repeat,
    linear-gradient(#ddd, #ddd) 51px 0 / 1px 100% no-repeat,
    linear-gradient(#ddd, #ddd) 51px 50% / 12px 1px no-repeat;
}

.tree .last {
  background:
    linear-gradient(#ddd, #ddd) 10px 0 / 1px 100% no-repeat,
    linear-gradient(#ddd, #ddd) 30px 0 / 1px 100% no-repeat,
    linear-gradient(#ddd, #ddd) 51px 0 / 1px 50% no-repeat,
    linear-gradient(#ddd, #ddd) 51px 50% / 12px 1px no-repeat;
}

.minus {
  flex: none;
  width: 11px;
  height: 11px;
  border: 1px solid #aaa;
  background: linear-gradient(#777, #777) 50% 50% / 7px 1px no-repeat #fff;
}

.box {
  flex: none;
  width: 16px;
  height: 16px;
  padding: 1px;
  border: 1px dashed #999;
}

.box::before {
  content: "";
  display: block;
  height: 12px;
  border: 1px solid #888;
  border-right-width: 2px;
  border-bottom-width: 2px;
  background: #fff;
}

.box.full::before {
  background: #4aa8ea;
  border-color: #5b93bd;
}

.tree strong {
  color: #000;
}

.hscroll {
  display: flex;
  align-items: center;
  height: 18px;
  padding: 0 18px 0 3px;
}

.hscroll .bar {
  width: 165px;
  height: 15px;
}

.hscroll .end {
  margin-left: auto;
}

.recorder {
  position: absolute;
  left: 20px;
  bottom: -5px;
  display: flex;
  align-items: center;
}

.recorder button {
  z-index: 1;
}

.recorder span {
  margin-left: -10px;
  padding: 2px 7px 2px 16px;
  border-radius: 3px;
  background: #55585b;
  color: #fff;
  font-size: 16px;
  line-height: 23px;
}

/* drawing area */
.canvas {
  display: grid;
  grid-template-columns: 1fr 17px;
  grid-template-rows: 21px 1fr 18px;
  min-width: 0;
  min-height: 0;
}

.view-tabs {
  grid-column: 1 / 3;
  display: flex;
  justify-content: space-between;
  align-items: center;
  padding-right: 4px;
  background: #cbcbcb;
}

.view-tab {
  display: flex;
  align-items: center;
  gap: 7px;
  width: 127px;
  height: 21px;
  padding: 0 4px;
  background: #fff;
  font-weight: bold;
}

.view-tab .x {
  margin-left: auto;
}

.drawing {
  position: relative;
  min-height: 0;
  background: #fff;
}

.sheet {
  width: 100%;
  height: 100%;
}

.dim text {
  fill: #222;
  font-family: "Liberation Sans", sans-serif;
  font-size: 9px;
  text-anchor: middle;
}

.navbar {
  position: absolute;
  top: 2px;
  right: 1px;
  display: flex;
  flex-direction: column;
  align-items: center;
  justify-content: space-between;
  width: 28px;
  height: 94px;
  padding: 2px;
  border: 1px solid #bbb;
  border-radius: 4px;
  background: #f4f4f4;
}

.navbar .dd {
  opacity: .6;
}

.navbar i {
  align-self: flex-end;
  width: 6px;
  height: 6px;
  border: 1px solid #aaa;
  border-radius: 50%;
}

.navbar hr {
  width: 22px;
  margin: 0;
  border: 0;
  border-top: 1px solid #ccc;
}

.nav-2d {
  fill: #6a9fd0;
  font-size: 7px;
  font-weight: bold;
  text-anchor: middle;
}

.view-bar {
  height: 17px;
  margin-top: 376px;
}

.view-controls {
  grid-column: 1 / 3;
  display: flex;
  align-items: center;
  border-bottom: 2px solid #ddd;
  background: #f0f0f0;
}

.view-controls .scale {
  width: 72px;
  padding-left: 4px;
}

.view-controls button {
  display: flex;
  justify-content: center;
  width: 20px;
  white-space: nowrap;
}

.view-controls button svg {
  width: 16px;
  height: 14px;
}

.track {
  flex: 1;
  display: flex;
  justify-content: center;
}

.track .bar {
  height: 16px;
  width: 17px;
}

.view-controls .arrow:last-child {
  margin-right: 19px;
}

/* status bar */
.status {
  display: grid;
  grid-template-columns: 932px 26px 203px 24px 20px 29px 24px 204px 1fr;
  align-items: center;
  background: #cbcbcb;
}

.hint {
  padding-left: 2px;
}

.status .combo {
  height: 18px;
  background: #fff;
  color: #888;
}

.status .ico, .count {
  justify-self: center;
}

.toggles {
  display: flex;
  justify-content: flex-end;
  padding-right: 62px;
}

.toggles button {
  width: 24px;
}

.toggles svg {
  width: 16px;
  height: 18px;
}

.toggles .filter {
  display: flex;
  align-items: center;
  width: 26px;
}

/* taskbar */
.taskbar {
  display: flex;
  justify-content: space-between;
  background: linear-gradient(90deg, #211f22 0, #231f21 30%, #331c20 42%, #331c20 49%, #2a1e20 56%, #221f22 64%, #221f22 77%, #331c20 86%, #331c20 100%);
  color: #fff;
}

.apps {
  display: flex;
}

.apps button {
  display: grid;
  place-items: center;
  width: 49px;
  border-bottom: 2px solid transparent;
}

.apps button:first-child {
  width: 48px;
}

.apps svg {
  width: 24px;
  height: 24px;
}

.apps button:nth-child(4) svg {
  width: 34px;
  height: 28px;
}

.apps .open {
  border-image: linear-gradient(90deg, transparent 4px, #efb0b8 4px, #efb0b8 45px, transparent 45px) 2;
  border-width: 0 0 2px;
  border-style: solid;
}

.apps .focus {
  background: #51474a;
}

.badge, .ca, .xl, .rvt, .x13 {
  fill: #fff;
  font-size: 11px;
  font-weight: bold;
  text-anchor: middle;
}

.ca, .x13 {
  fill: #222;
}

.rvt, .x13 {
  font-size: 5px;
}

.clock {
  display: flex;
  flex-direction: column;
  align-items: center;
  justify-content: space-around;
  padding-right: 9px;
}
```
